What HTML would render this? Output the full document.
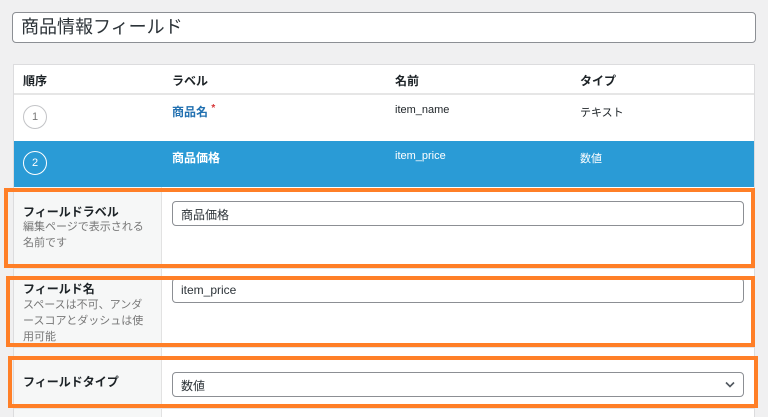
<!DOCTYPE html>
<html><head><meta charset="utf-8"><style>
*{box-sizing:border-box;margin:0;padding:0}
html,body{width:768px;height:417px;overflow:hidden}
body{background:#f0f0f1;font-family:"Liberation Sans","Noto Sans CJK JP",sans-serif;color:#1d2327;position:relative;font-size:12px}
.abs{position:absolute}
.title{left:12px;top:12px;width:744px;height:31px;border:1px solid #8c8f94;border-radius:4px;background:#fff;font-size:18px;line-height:28px;padding:0 8px;color:#2c3338}
.panel{left:13px;top:64px;width:742px;height:353px;background:#fff;border:1px solid #dcdcde;border-bottom:none}
.hdr{left:14px;top:65px;width:740px;height:30px;border-bottom:2px solid #e6e6e6}
.b{font-weight:bold}
.circ{width:24px;height:24px;border-radius:50%;border:1.5px solid #c3c4c7;display:flex;align-items:center;justify-content:center;font-size:11px;color:#777}
.blue{left:14px;top:141px;width:740px;height:46px;background:#2a9bd6}
.lab{left:14px;width:148px;background:#f6f7f7;border-right:1px solid #e2e2e2}
.inp{left:172px;width:572px;height:25px;border:1px solid #8c8f94;border-radius:4px;background:#fff;font-size:12px;padding:4px 8px;color:#2c3338}
.or{border:4px solid #ff7f27}
.desc{color:#777;font-size:11px;line-height:16px}
</style></head><body>
<div class="abs title">商品情報フィールド</div>
<div class="abs panel"></div>
<div class="abs hdr"></div>
<div class="abs b" style="left:23px;top:72px">順序</div>
<div class="abs b" style="left:172px;top:72px">ラベル</div>
<div class="abs b" style="left:395px;top:72px">名前</div>
<div class="abs b" style="left:580px;top:72px">タイプ</div>
<div class="abs circ" style="left:23px;top:105px">1</div>
<div class="abs b" style="left:172px;top:103px;color:#2271b1">商品名 <span style="color:#d63638;font-size:10px;vertical-align:top">*</span></div>
<div class="abs" style="left:395px;top:104px;font-size:11px">item_name</div>
<div class="abs" style="left:580px;top:104px;font-size:11px">テキスト</div>
<div class="abs blue"></div>
<div class="abs circ" style="left:23px;top:151px;border-color:#fff;color:#fff">2</div>
<div class="abs b" style="left:172px;top:149px;color:#fff">商品価格</div>
<div class="abs" style="left:395px;top:150px;font-size:11px;color:#fff">item_price</div>
<div class="abs" style="left:580px;top:150px;font-size:11px;color:#fff">数値</div>
<div class="abs lab" style="top:187px;height:230px"></div>
<div class="abs" style="left:14px;top:268px;width:740px;height:1px;background:#e6e6e6"></div>
<div class="abs" style="left:14px;top:347px;width:740px;height:1px;background:#e6e6e6"></div>
<div class="abs" style="left:14px;top:408px;width:740px;height:1px;background:#e6e6e6"></div>
<div class="abs b" style="left:23px;top:203px">フィールドラベル</div>
<div class="abs desc" style="left:23px;top:219px">編集ページで表示される<br>名前です</div>
<div class="abs inp" style="top:201px">商品価格</div>
<div class="abs b" style="left:23px;top:280px">フィールド名</div>
<div class="abs desc" style="left:23px;top:297px">スペースは不可、アンダ<br>ースコアとダッシュは使<br>用可能</div>
<div class="abs inp" style="top:278px">item_price</div>
<div class="abs b" style="left:23px;top:373px">フィールドタイプ</div>
<div class="abs inp" style="top:372px">数値<svg style="position:absolute;right:8px;top:8px" width="10" height="7" viewBox="0 0 10 7"><path d="M1 1.5L5 5.5L9 1.5" stroke="#50575e" stroke-width="1.6" fill="none"/></svg></div>
<div class="abs or" style="left:4px;top:188px;width:751px;height:80px"></div>
<div class="abs or" style="left:6px;top:276px;width:749px;height:71px"></div>
<div class="abs or" style="left:8px;top:356px;width:750px;height:52px"></div>
</body></html>
